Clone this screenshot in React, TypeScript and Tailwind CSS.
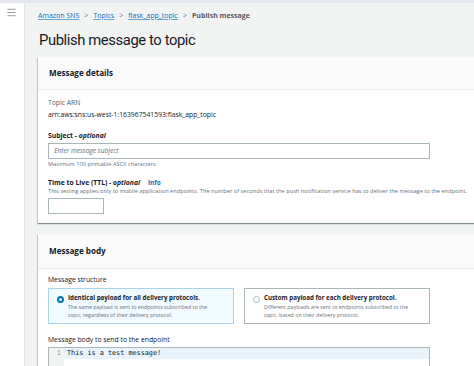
import { Menu } from "lucide-react"

const font = { fontFamily: '"Open Sans", "Noto Sans", sans-serif' }
const cardShadow =
  "bg-white shadow-[0_1px_1px_0_rgba(0,28,36,0.3),1px_1px_1px_0_rgba(0,28,36,0.15),-1px_1px_1px_0_rgba(0,28,36,0.15)]"

function Crumb({ label, link = true }: { label: string; link?: boolean }) {
  return link ? (
    <span className="text-[#0073bb] underline decoration-[#0073bb]/60">{label}</span>
  ) : (
    <span className="font-bold text-[#545b64]">{label}</span>
  )
}

function Sep() {
  return <span className="mx-[5px] text-[#687078]">&gt;</span>
}

function RadioTile({
  checked,
  title,
  desc,
}: {
  checked: boolean
  title: string
  desc: string
}) {
  return (
    <div
      className={
        checked
          ? "flex h-[36px] w-[186px] gap-[4px] border border-[#a9d3ee] bg-[#f1faff] pl-[8px] pr-[12px] pt-[5px]"
          : "flex h-[36px] w-[186px] gap-[4px] border border-[#aab7b8] bg-white pl-[8px] pr-[12px] pt-[5px]"
      }
    >
      <span
        className={
          checked
            ? "mt-[2px] h-[7px] w-[7px] shrink-0 rounded-full border-[2px] border-[#0073bb] bg-white"
            : "mt-[2px] h-[7px] w-[7px] shrink-0 rounded-full border border-[#aab7b8] bg-white"
        }
      />
      <div className="leading-[8px]">
        <div className="text-[6.2px] font-bold text-[#16191f]">{title}</div>
        <div className="mt-[1px] text-[5.3px] text-[#687078]">{desc}</div>
      </div>
    </div>
  )
}

export default function App() {
  return (
    <div
      className="flex h-[366px] w-[474px] overflow-hidden border-t-[3px] border-[#e4e8ec] bg-[#f2f3f3]"
      style={font}
    >
      {/* Side nav */}
      <aside className="w-[25px] shrink-0 border-r border-[#e4e6e8] bg-white pt-[4px]">
        <Menu className="ml-[6px] h-[11px] w-[11px] text-[#687078]" strokeWidth={1.5} />
      </aside>

      <main className="flex-1 pl-[13px] pr-[2px]">
        {/* Breadcrumb */}
        <nav className="mt-[8px] flex items-center text-[7px] leading-[10px]">
          <Crumb label="Amazon SNS" />
          <Sep />
          <Crumb label="Topics" />
          <Sep />
          <Crumb label="flask_app_topic" />
          <Sep />
          <Crumb label="Publish message" link={false} />
        </nav>

        <h1
          className="ml-[1px] mt-[9px] text-[14.8px] leading-[20px] tracking-[-0.4px] text-[#16191f]"
          style={{ fontFamily: 'Roboto, "Open Sans", sans-serif' }}
        >
          Publish message to topic
        </h1>

        {/* Message details */}
        <section className={"mt-[7px] " + cardShadow}>
          <div className="flex h-[33px] items-center border-b border-[#eaeded] bg-[#fafafa] px-[11px]">
            <h2 className="text-[8.1px] font-bold text-[#16191f]">Message details</h2>
          </div>
          <div className="px-[10px] pb-[9px] pt-[8px]">
            <div className="text-[6.8px] leading-[9px] text-[#545b64]">Topic ARN</div>
            <div className="mt-[3px] text-[6.8px] leading-[9px] text-[#16191f]">
              arn:aws:sns:us-west-1:163967541593:flask_app_topic
            </div>

            <div className="mt-[12px] text-[6.8px] font-bold leading-[9px] text-[#16191f]">
              Subject - <i>optional</i>
            </div>
            <div className="mt-[3px] flex h-[16px] w-[382px] items-center border border-[#aab7b8] px-[5px] text-[6.6px] italic text-[#687078]">
              Enter message subject
            </div>
            <div className="mt-[1px] text-[5.7px] leading-[8px] text-[#687078]">
              Maximum 100 printable ASCII characters
            </div>

            <div className="mt-[10px] flex items-center text-[6.8px] font-bold leading-[9px] text-[#16191f]">
              <span>
                Time to Live (TTL) - <i>optional</i>
              </span>
              <span className="ml-[8px] text-[6.3px] text-[#0073bb]">Info</span>
            </div>
            <div className="whitespace-nowrap text-[5.7px] leading-[8px] text-[#687078]">
              This setting applies only to mobile application endpoints. The number of seconds that the push notification service has to deliver the message to the endpoint.
            </div>
            <div className="mt-[3px] h-[16px] w-[56px] border border-[#aab7b8] bg-white" />
          </div>
        </section>

        {/* Message body */}
        <section className={"mt-[11px] " + cardShadow}>
          <div className="flex h-[35px] items-center border-b border-[#eaeded] bg-[#fafafa] px-[11px]">
            <h2 className="text-[8.1px] font-bold text-[#16191f]">Message body</h2>
          </div>
          <div className="px-[10px] pt-[6px]">
            <div className="text-[6.8px] leading-[9px] text-[#16191f]">Message structure</div>
            <div className="mt-[4px] flex gap-[10px]">
              <RadioTile
                checked
                title="Identical payload for all delivery protocols."
                desc="The same payload is sent to endpoints subscribed to the topic, regardless of their delivery protocol."
              />
              <RadioTile
                checked={false}
                title="Custom payload for each delivery protocol."
                desc="Different payloads are sent to endpoints subscribed to the topic, based on their delivery protocol."
              />
            </div>

            <div className="mt-[11px] text-[6.8px] leading-[9px] text-[#16191f]">
              Message body to send to the endpoint
            </div>
            <div className="mt-[3px] flex h-[40px] w-[382px] border border-[#aab7b8]">
              <div className="w-[15px] bg-[#f2f3f3] pr-[3px] pt-[1px] text-right font-mono text-[6.5px] leading-[10px] text-[#879596]">
                1
              </div>
              <div className="flex-1">
                <div
                  className="h-[11px] bg-[#e8f3fc] pl-[3px] text-[6.8px] leading-[11px] text-[#16191f]"
                  style={{ fontFamily: '"DejaVu Sans Mono", monospace' }}
                >
                  This is a test message!
                </div>
              </div>
            </div>
          </div>
        </section>
      </main>
    </div>
  )
}
